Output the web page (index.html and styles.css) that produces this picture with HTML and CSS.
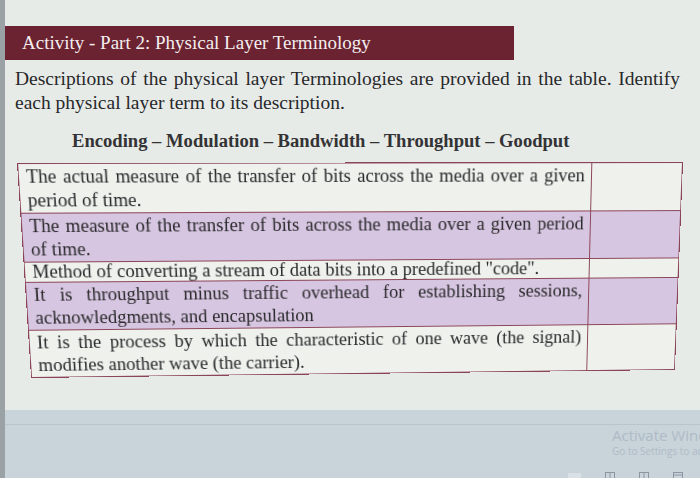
FILE: index.html
```html
<!DOCTYPE html>
<html lang="en">
<head>
<meta charset="utf-8">
<title>Activity - Part 2: Physical Layer Terminology</title>
<link rel="stylesheet" href="styles.css">
</head>
<body>
<div class="screen">
  <div class="slide">
    <div class="title-bar">Activity - Part 2: Physical Layer Terminology</div>
    <p class="intro"><span class="jl">Descriptions of the physical layer Terminologies are provided in the table. Identify</span><span class="ln">each physical layer term to its description.</span></p>
    <p class="terms">Encoding – Modulation – Bandwidth – Throughput – Goodput</p>
    <table class="terms-table">
      <tr class="row row-light">
        <td class="desc"><span class="jl">The actual measure of the transfer of bits across the media over a given</span><span class="ln">period of time.</span></td>
        <td class="answer"></td>
      </tr>
      <tr class="row row-purple">
        <td class="desc"><span class="jl">The measure of the transfer of bits across the media over a given period</span><span class="ln">of time.</span></td>
        <td class="answer"></td>
      </tr>
      <tr class="row row-light row-single">
        <td class="desc"><span class="ln">Method of converting a stream of data bits into a predefined "code".</span></td>
        <td class="answer"></td>
      </tr>
      <tr class="row row-purple">
        <td class="desc"><span class="jl">It is throughput minus traffic overhead for establishing sessions,</span><span class="ln">acknowledgments, and encapsulation</span></td>
        <td class="answer"></td>
      </tr>
      <tr class="row row-light">
        <td class="desc"><span class="jl">It is the process by which the characteristic of one wave (the signal)</span><span class="ln">modifies another wave (the carrier).</span></td>
        <td class="answer"></td>
      </tr>
    </table>
  </div>
  <div class="desktop">
    <div class="desk-line"></div>
    <div class="activate">
      <div class="act-title">Activate Windows</div>
      <div class="act-sub">Go to Settings to activate Windows.</div>
    </div>
    <div class="taskbar">
      <span class="tb-active"></span>
      <svg class="tb-icon" width="10" height="6" viewBox="0 0 10 6"><rect x="0.5" y="0.5" width="9" height="6" fill="none" stroke="#8a96a2"/><line x1="5" y1="0" x2="5" y2="6" stroke="#8a96a2"/></svg>
      <svg class="tb-icon" width="10" height="6" viewBox="0 0 10 6"><rect x="0.5" y="0.5" width="9" height="6" fill="none" stroke="#8a96a2"/><line x1="5" y1="0" x2="5" y2="6" stroke="#8a96a2"/></svg>
      <svg class="tb-icon" width="10" height="6" viewBox="0 0 10 6"><rect x="0.5" y="0.5" width="9" height="6" fill="none" stroke="#8a96a2"/><line x1="0" y1="3" x2="10" y2="3" stroke="#8a96a2"/></svg>
    </div>
  </div>
</div>
</body>
</html>
```

FILE: styles.css
```css
* { box-sizing: border-box; }

html, body {
  margin: 0;
  padding: 0;
  width: 700px;
  height: 478px;
  overflow: hidden;
}

body {
  background: #c9d3da;
  font-family: "Liberation Serif", "Times New Roman", serif;
  color: #28282a;
}

.screen {
  width: 700px;
  height: 478px;
  border-left: 5px solid #9aa2a5;
  display: flex;
  flex-direction: column;
  overflow: hidden;
}

.slide {
  height: 410px;
  flex: none;
  background: #e7ebe8;
  display: flex;
  flex-direction: column;
  align-items: flex-start;
}

.title-bar {
  margin-top: 26px;
  width: 509px;
  height: 34px;
  background: #6b2231;
  color: #f4eeee;
  font-size: 19px;
  line-height: 34px;
  padding-left: 17px;
  white-space: nowrap;
}

.intro {
  margin: 7px 0 0 10px;
  width: 665px;
  font-size: 19.5px;
  line-height: 24px;
}

.jl {
  display: block;
  white-space: nowrap;
  text-align: justify;
  text-align-last: justify;
}

.ln {
  display: block;
  white-space: nowrap;
}

.terms {
  margin: 14px 0 0 67px;
  font-size: 18.6px;
  line-height: 24px;
  font-weight: bold;
  color: #333335;
  white-space: nowrap;
}

/* the photographed slide is seen at a slight angle: a perspective mapping
   puts the table's corners where the photo shows them */
.terms-table {
  margin: 10px 0 0 19px;
  width: 656px;
  border-collapse: collapse;
  font-size: 18.5px;
  transform-origin: 0 0;
  transform: matrix3d(1.050558, -0.001578, 0, 0.0000535884,
                      0.067180, 1.044358, 0, 0.000163198,
                      0, 0, 1, 0,
                      -7, 0, 0, 1);
}

.terms-table td {
  border: 1px solid #8b4558;
  padding: 1px 6px 0 7px;
  line-height: 23px;
  vertical-align: top;
}

.row { height: 48px; }
.row-single { height: 20px; }
.row-single td { line-height: 18px; padding-top: 0; }

.row-light { background: #eff1ed; }
.row-purple { background: #d7c6e1; }

.desc { width: 563px; }
.answer { width: 93px; }

.desktop {
  flex: 1;
  display: flex;
  flex-direction: column;
}

.desk-line {
  margin-top: 14px;
  height: 1px;
  background: #b9c4cc;
}

.activate {
  padding-left: 607px;
  margin-top: 1px;
  white-space: nowrap;
  font-family: "Open Sans", "Noto Sans", sans-serif;
  color: #aebbc6;
}

.act-title {
  font-size: 15px;
  line-height: 18px;
}

.act-sub {
  font-size: 10px;
  line-height: 14px;
}

.taskbar {
  display: flex;
  align-items: flex-end;
  gap: 24px;
  padding-left: 563px;
  margin-top: auto;
  height: 8px;
}

.tb-active {
  width: 13px;
  height: 5px;
  background: #d9e0e6;
}

.tb-icon { display: block; }
```
